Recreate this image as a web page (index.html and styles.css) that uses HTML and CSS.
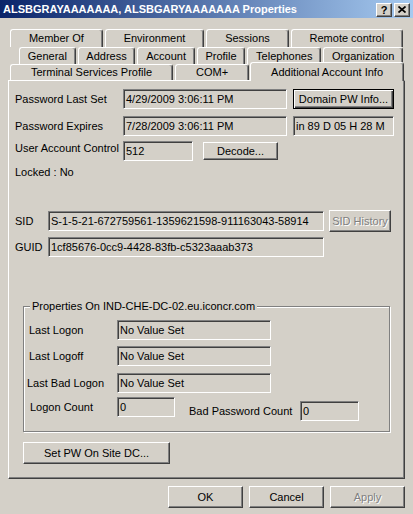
FILE: index.html
```html
<!DOCTYPE html>
<html>
<head>
<meta charset="utf-8">
<link rel="stylesheet" href="styles.css">
</head>
<body>
<div class="window">
  <div class="titlebar">
    <span class="title">ALSBGRAYAAAAAAA, ALSBGARYAAAAAAA Properties</span>
    <div class="tbtns">
      <span class="tbtn">?</span>
      <span class="tbtn"><svg width="8" height="7" viewBox="0 0 8 7"><path d="M0.5 0.5L7.5 6.5M7.5 0.5L0.5 6.5" stroke="#000" stroke-width="1.7" fill="none"/></svg></span>
    </div>
  </div>
  <div class="tabs">
    <div class="tabrow r1">
      <span class="tab">Member Of</span>
      <span class="tab">Environment</span>
      <span class="tab">Sessions</span>
      <span class="tab">Remote control</span>
    </div>
    <div class="tabrow r2">
      <span class="tab">General</span>
      <span class="tab">Address</span>
      <span class="tab">Account</span>
      <span class="tab">Profile</span>
      <span class="tab">Telephones</span>
      <span class="tab">Organization</span>
    </div>
    <div class="tabrow r3">
      <span class="tab">Terminal Services Profile</span>
      <span class="tab">COM+</span>
      <span class="tab selected">Additional Account Info</span>
    </div>
  </div>
  <div class="panel">
    <div class="row rowA">
      <span class="lbl lbl-main">Password Last Set</span>
      <span class="field w-date">4/29/2009 3:06:11 PM</span>
      <span class="btn default w-side">Domain PW Info...</span>
    </div>
    <div class="row rowB">
      <span class="lbl lbl-main">Password Expires</span>
      <span class="field w-date">7/28/2009 3:06:11 PM</span>
      <span class="field w-side gap6">in 89 D 05 H 28 M</span>
    </div>
    <div class="row rowC">
      <span class="lbl lbl-main lbl-up">User Account Control</span>
      <span class="field w-uac">512</span>
      <span class="btn w-decode">Decode...</span>
    </div>
    <div class="locked">Locked : No</div>
    <div class="row rowSid">
      <span class="lbl lbl-sid">SID</span>
      <span class="field w-sid">S-1-5-21-672759561-1359621598-911163043-58914</span>
      <span class="btn disabled w-sidh">SID History</span>
    </div>
    <div class="row rowGuid">
      <span class="lbl lbl-sid">GUID</span>
      <span class="field w-sid">1cf85676-0cc9-4428-83fb-c5323aaab373</span>
    </div>
    <fieldset class="group">
      <legend>Properties On IND-CHE-DC-02.eu.iconcr.com</legend>
      <div class="row grow g1">
        <span class="lbl lbl-g">Last Logon</span>
        <span class="field w-val">No Value Set</span>
      </div>
      <div class="row grow g2">
        <span class="lbl lbl-g">Last Logoff</span>
        <span class="field w-val">No Value Set</span>
      </div>
      <div class="row grow g3">
        <span class="lbl lbl-g lbl-left">Last Bad Logon</span>
        <span class="field w-val">No Value Set</span>
      </div>
      <div class="countrow g4">
        <div class="row">
          <span class="lbl lbl-g lbl-right">Logon Count</span>
          <span class="field w-count">0</span>
        </div>
        <div class="row badpw">
          <span class="lbl lbl-bad">Bad Password Count</span>
          <span class="field w-count2">0</span>
        </div>
      </div>
    </fieldset>
    <span class="btn w-setpw">Set PW On Site DC...</span>
  </div>
  <div class="footer">
    <span class="btn w-foot">OK</span>
    <span class="btn w-foot">Cancel</span>
    <span class="btn w-foot disabled">Apply</span>
  </div>
</div>
</body>
</html>
```
FILE: styles.css
```css
* { box-sizing: border-box; }
html, body { margin: 0; padding: 0; }
body {
  background: #d4d0c8;
  font: 11px "Liberation Sans", Arial, sans-serif;
  color: #000;
}
.window {
  width: 413px;
  height: 514px;
  background: #d4d0c8;
  overflow: hidden;
}
.titlebar {
  height: 18px;
  display: flex;
  align-items: center;
  justify-content: space-between;
  padding: 0 3px 0 3px;
  background: linear-gradient(to right, #0a246a, #a6caf0);
  color: #fff;
  font-weight: bold;
}
.title { line-height: 18px; white-space: nowrap; }
.tbtns { display: flex; gap: 2px; margin-top: 1px; }
.tbtn {
  width: 16px;
  height: 14px;
  background: #d4d0c8;
  border: 1px solid;
  border-color: #fff #404040 #404040 #fff;
  box-shadow: inset -1px -1px 0 #808080;
  display: flex;
  align-items: center;
  justify-content: center;
  color: #000;
  font-weight: bold;
  font-size: 11px;
  line-height: 12px;
}
.tabs { padding-top: 11px; }
.tabrow { display: flex; padding-right: 10px; }
.r1 { height: 18px; padding-left: 10px; }
.r2 { height: 17px; padding-left: 19px; }
.r3 { height: 16px; padding-left: 10px; padding-right: 11px; align-items: flex-end; }
.tab {
  flex: 1 1 auto;
  height: 100%;
  padding: 0 6px;
  margin-right: 2px;
  background: #d4d0c8;
  border-top: 1px solid #fff;
  border-left: 1px solid #fff;
  border-right: 1px solid #404040;
  box-shadow: inset -1px 0 0 #808080;
  border-radius: 3px 3px 0 0;
  text-align: center;
  white-space: nowrap;
}
.tab:last-child { margin-right: 0; }
.r1 .tab { line-height: 17px; }
.r2 .tab { line-height: 16px; }
.r3 .tab { line-height: 15px; }
.r3 .tab.selected {
  height: 19px;
  line-height: 18px;
  margin-left: -1px;
  margin-right: -2px;
  margin-bottom: -1px;
  position: relative;
  z-index: 1;
}
.panel {
  margin: 0 8px;
  height: 399px;
  padding-left: 6px;
  border: 1px solid;
  border-color: #fff #404040 #404040 #fff;
  box-shadow: inset -1px -1px 0 #808080;
}
.row { display: flex; align-items: center; }
.lbl { white-space: nowrap; flex: none; }
.lbl-main { width: 108px; }
.lbl-up { align-self: flex-start; line-height: 14px; }
.lbl-sid { width: 33px; }
.lbl-g { width: 88px; }
.lbl-left { margin-left: -2px; margin-right: 2px; }
.lbl-right { margin-left: 1px; margin-right: -1px; }
.lbl-bad { width: 111px; margin-left: 14px; }
.field {
  flex: none;
  height: 20px;
  border: 1px solid;
  border-color: #808080 #fff #fff #808080;
  box-shadow: inset 1px 1px 0 #404040, inset -1px -1px 0 #d4d0c8;
  padding: 0 2px;
  line-height: 18px;
  white-space: nowrap;
  overflow: hidden;
}
.btn {
  flex: none;
  display: flex;
  align-items: center;
  justify-content: center;
  background: #d4d0c8;
  border: 1px solid;
  border-color: #fff #404040 #404040 #fff;
  box-shadow: inset -1px -1px 0 #808080;
  white-space: nowrap;
}
.btn.default {
  border-color: #000;
  box-shadow: inset 1px 1px 0 #fff, inset -1px -1px 0 #404040, inset -2px -2px 0 #808080;
}
.btn.disabled { color: #808080; text-shadow: 1px 1px 0 #fff; }
.w-date { width: 164px; }
.w-side { width: 101px; height: 20px; margin-left: 6px; }
.gap6 { margin-left: 6px; }
.w-uac { width: 70px; }
.w-decode { width: 75px; height: 18px; margin-left: 10px; }
.w-sid { width: 276px; }
.w-sidh { width: 62px; height: 22px; margin-left: 5px; }
.w-val { width: 154px; }
.w-count { width: 58px; }
.w-count2 { width: 59px; }
.rowA { margin-top: 8px; }
.rowB { margin-top: 7px; }
.rowC { margin-top: 5px; height: 20px; }
.locked { margin-top: 4px; line-height: 14px; }
.rowSid { margin-top: 31px; }
.rowGuid { margin-top: 5px; }
.group {
  margin: 43px 0 0 8px;
  width: 367px;
  padding: 7px 0 10px 5px;
  border: 1px solid #808080;
  box-shadow: inset 1px 1px 0 #fff, 1px 1px 0 #fff;
  min-width: 0;
}
.group legend {
  padding: 0 2px;
  margin-left: 1px;
  line-height: 13px;
  background: #d4d0c8;
}
.g2 { margin-top: 6px; }
.g3 { margin-top: 7px; }
.countrow { display: flex; align-items: flex-start; margin-top: 4px; }
.badpw { margin-top: 4px; }
.w-setpw { display: inline-flex; width: 147px; height: 22px; margin: 10px 0 0 8px; }
.footer {
  display: flex;
  justify-content: flex-end;
  gap: 6px;
  padding-right: 8px;
  margin-top: 7px;
}
.w-foot { width: 75px; height: 22px; }
```
